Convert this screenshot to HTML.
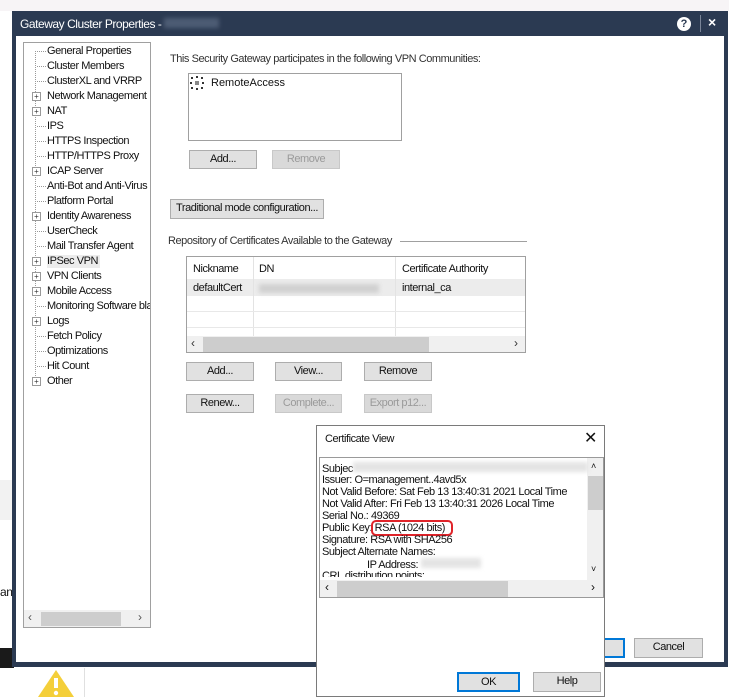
<!DOCTYPE html>
<html><head><meta charset="utf-8"><style>
*{margin:0;padding:0;box-sizing:border-box}
body{width:729px;height:697px;position:relative;overflow:hidden;background:#fff;font-family:"Liberation Sans",sans-serif;font-size:11px;color:#111;letter-spacing:-0.45px}
.a{position:absolute;white-space:nowrap}
.btn{position:absolute;background:#e1e1e1;border:1px solid #adadad;text-align:center;line-height:17px;font-size:11px;white-space:nowrap}
.dis{color:#9a9a9a;background:#d9d9d9;border-color:#c8c8c8}
.ti{position:absolute;left:47px;line-height:13px;white-space:nowrap}
.pl{position:absolute;left:32px;width:9px;height:9px;border:1px solid #999;font-size:8px;line-height:7px;text-align:center;color:#333;background:#fff;letter-spacing:0}
.dot{position:absolute;left:37px;width:9px;border-top:1px dotted #999}
.cl{position:absolute;left:322px;line-height:12px;font-size:11px;white-space:nowrap}
.blur{position:absolute;background:#e6e6e6;filter:blur(2px)}
</style></head><body>
<div class="a" style="left:0;top:0;width:729px;height:11px;background:#f7f4f6"></div>
<div class="a" style="left:0;top:480px;width:12px;height:40px;background:#f2f2f2"></div>
<div class="a" style="left:0;top:585px;font-size:12px">an</div>
<div class="a" style="left:0;top:648px;width:14px;height:20px;background:#1a1a1a"></div>
<svg class="a" style="left:36px;top:668px" width="40" height="29"><path d="M20 2 L38 29 L2 29 Z" fill="#f4cf3a"/><rect x="18" y="10" width="4" height="10" fill="#fff"/><circle cx="20" cy="25" r="2.2" fill="#fff"/></svg>
<div class="a" style="left:84px;top:668px;width:1px;height:29px;background:#e0e0e0"></div>
<div class="a" style="left:12px;top:11px;width:716px;height:656px;background:#2b3a52"></div>
<div class="a" style="left:16px;top:36px;width:708px;height:626px;background:#fff"></div>
<div class="a" style="left:20px;top:17px;color:#fff;font-size:12px">Gateway Cluster Properties - <span style="display:inline-block;width:55px;height:10px;background:#4d5c74;filter:blur(2px)"></span></div>
<div class="a" style="left:677px;top:17px;width:14px;height:14px;border-radius:50%;background:#fff;color:#2b3a52;font-weight:bold;font-size:11px;text-align:center;line-height:14px;letter-spacing:0">?</div>
<div class="a" style="left:700px;top:15px;width:1px;height:17px;background:#7a8598"></div>
<div class="a" style="left:708px;top:14px;color:#fff;font-size:14px;font-weight:bold">×</div>
<div class="a" style="left:23px;top:42px;width:128px;height:586px;overflow:hidden">
<div style="position:absolute;left:-23px;top:-41px;width:200px;height:700px">
<div class="a" style="left:35px;top:50px;height:331px;border-left:1px dotted #999"></div>
<div class="dot" style="top:50px"></div><div class="ti" style="top:44px">General Properties</div>
<div class="dot" style="top:65px"></div><div class="ti" style="top:59px">Cluster Members</div>
<div class="dot" style="top:80px"></div><div class="ti" style="top:74px">ClusterXL and VRRP</div>
<div class="pl" style="top:91px">+</div><div class="ti" style="top:89px">Network Management</div>
<div class="pl" style="top:106px">+</div><div class="ti" style="top:104px">NAT</div>
<div class="dot" style="top:125px"></div><div class="ti" style="top:119px">IPS</div>
<div class="dot" style="top:140px"></div><div class="ti" style="top:134px">HTTPS Inspection</div>
<div class="dot" style="top:155px"></div><div class="ti" style="top:149px">HTTP/HTTPS Proxy</div>
<div class="pl" style="top:166px">+</div><div class="ti" style="top:164px">ICAP Server</div>
<div class="dot" style="top:185px"></div><div class="ti" style="top:179px">Anti-Bot and Anti-Virus</div>
<div class="dot" style="top:200px"></div><div class="ti" style="top:194px">Platform Portal</div>
<div class="pl" style="top:211px">+</div><div class="ti" style="top:209px">Identity Awareness</div>
<div class="dot" style="top:230px"></div><div class="ti" style="top:224px">UserCheck</div>
<div class="dot" style="top:245px"></div><div class="ti" style="top:239px">Mail Transfer Agent</div>
<div class="pl" style="top:256px">+</div><div class="ti" style="top:254px;background:#ececec;padding-right:2px">IPSec VPN</div>
<div class="pl" style="top:271px">+</div><div class="ti" style="top:269px">VPN Clients</div>
<div class="pl" style="top:286px">+</div><div class="ti" style="top:284px">Mobile Access</div>
<div class="dot" style="top:305px"></div><div class="ti" style="top:299px">Monitoring Software blade</div>
<div class="pl" style="top:316px">+</div><div class="ti" style="top:314px">Logs</div>
<div class="dot" style="top:335px"></div><div class="ti" style="top:329px">Fetch Policy</div>
<div class="dot" style="top:350px"></div><div class="ti" style="top:344px">Optimizations</div>
<div class="dot" style="top:365px"></div><div class="ti" style="top:359px">Hit Count</div>
<div class="pl" style="top:376px">+</div><div class="ti" style="top:374px">Other</div>
</div>
<div class="a" style="left:1px;top:568px;width:126px;height:17px;background:#f0f0f0"></div>
<div class="a" style="left:18px;top:570px;width:80px;height:14px;background:#cdcdcd"></div>
<div class="a" style="left:5px;top:568px;font-size:12px;color:#555">‹</div>
<div class="a" style="left:115px;top:568px;font-size:12px;color:#555">›</div>
</div>
<div class="a" style="left:23px;top:42px;width:128px;height:586px;border:1px solid #a0a0a0"></div>
<div class="a" style="left:170px;top:53px;color:#333">This Security Gateway participates in the following VPN Communities:</div>
<div class="a" style="left:188px;top:73px;width:214px;height:68px;border:1px solid #a0a0a0"></div>
<svg class="a" style="left:190px;top:76px" width="14" height="14"><g fill="#333"><rect x="1" y="1" width="2" height="2"/><rect x="6" y="0" width="2" height="2"/><rect x="11" y="1" width="2" height="2"/><rect x="0" y="6" width="2" height="2"/><rect x="12" y="6" width="2" height="2"/><rect x="1" y="11" width="2" height="2"/><rect x="6" y="12" width="2" height="2"/><rect x="11" y="11" width="2" height="2"/><rect x="5" y="5" width="4" height="4" fill="#888"/></g></svg>
<div class="a" style="left:211px;top:77px;font-size:11px;letter-spacing:0">RemoteAccess</div>
<div class="btn" style="left:189px;top:150px;width:68px;height:19px">Add...</div>
<div class="btn dis" style="left:272px;top:150px;width:68px;height:19px">Remove</div>
<div class="btn" style="left:170px;top:199px;width:154px;height:20px">Traditional mode configuration...</div>
<div class="a" style="left:168px;top:235px;color:#333">Repository of Certificates Available to the Gateway</div>
<div class="a" style="left:400px;top:241px;width:127px;height:1px;background:#a0a0a0"></div>
<div class="a" style="left:186px;top:256px;width:340px;height:97px;border:1px solid #a0a0a0;overflow:hidden">
<div class="a" style="left:0;top:22px;width:340px;height:17px;background:#ececec"></div>
<div class="a" style="left:66px;top:0;width:1px;height:80px;background:#e3e3e3"></div>
<div class="a" style="left:208px;top:0;width:1px;height:80px;background:#e3e3e3"></div>
<div class="a" style="left:0;top:54px;width:340px;height:1px;background:#e8e8e8"></div>
<div class="a" style="left:0;top:70px;width:340px;height:1px;background:#e8e8e8"></div>
<div class="a" style="left:6px;top:6px">Nickname</div><div class="a" style="left:72px;top:6px">DN</div><div class="a" style="left:215px;top:6px">Certificate Authority</div>
<div class="a" style="left:6px;top:25px">defaultCert</div>
<div class="blur" style="left:72px;top:27px;width:120px;height:9px;background:#d0d0d0"></div>
<div class="a" style="left:215px;top:25px">internal_ca</div>
<div class="a" style="left:0;top:79px;width:340px;height:17px;background:#f0f0f0"></div>
<div class="a" style="left:16px;top:80px;width:226px;height:15px;background:#cdcdcd"></div>
<div class="a" style="left:4px;top:79px;font-size:12px;color:#333">‹</div>
<div class="a" style="left:327px;top:79px;font-size:12px;color:#333">›</div>
</div>
<div class="btn" style="left:186px;top:362px;width:68px;height:19px">Add...</div>
<div class="btn" style="left:275px;top:362px;width:67px;height:19px">View...</div>
<div class="btn" style="left:364px;top:362px;width:68px;height:19px">Remove</div>
<div class="btn" style="left:186px;top:394px;width:68px;height:19px">Renew...</div>
<div class="btn dis" style="left:275px;top:394px;width:67px;height:19px">Complete...</div>
<div class="btn dis" style="left:364px;top:394px;width:68px;height:19px">Export p12...</div>
<div class="btn" style="left:600px;top:638px;width:25px;height:20px;border:2px solid #0078d7"></div>
<div class="btn" style="left:634px;top:638px;width:69px;height:20px">Cancel</div>
<div class="a" style="left:316px;top:425px;width:289px;height:272px;background:#fff;border:1px solid #7a7a7a"></div>
<div class="a" style="left:325px;top:433px;font-size:11px">Certificate View</div>
<div class="a" style="left:584px;top:428px;font-size:16px;font-weight:300">✕</div>
<div class="a" style="left:319px;top:457px;width:285px;height:141px;border:1px solid #9a9a9a;overflow:hidden">
<div class="a" style="left:267px;top:0;width:17px;height:122px;background:#f0f0f0"></div>
<div class="a" style="left:268px;top:18px;width:15px;height:34px;background:#cdcdcd"></div>
<div class="a" style="left:271px;top:3px;font-size:9px">˄</div>
<div class="a" style="left:271px;top:106px;font-size:9px">˅</div>
<div class="a" style="left:0;top:122px;width:284px;height:18px;background:#f0f0f0"></div>
<div class="a" style="left:17px;top:123px;width:171px;height:16px;background:#cdcdcd"></div>
<div class="a" style="left:5px;top:122px;font-size:12px">‹</div>
<div class="a" style="left:271px;top:122px;font-size:12px">›</div>
</div>
<div class="cl" style="top:462px">Subjec<span style="display:inline-block;width:235px;height:10px;background:#e4e4e4;filter:blur(2px)"></span></div>
<div class="cl" style="top:474px">Issuer: O=management..4avd5x</div>
<div class="cl" style="top:486px">Not Valid Before: Sat Feb 13 13:40:31 2021 Local Time</div>
<div class="cl" style="top:498px">Not Valid After:  Fri Feb 13 13:40:31 2026 Local Time</div>
<div class="cl" style="top:510px">Serial No.:  49369</div>
<div class="cl" style="top:522px">Public Key: RSA (1024 bits)</div>
<div class="a" style="left:371px;top:520px;width:82px;height:16px;border:2px solid #e0242a;border-radius:5px"></div>
<div class="cl" style="top:534px">Signature: RSA with SHA256</div>
<div class="cl" style="top:546px">Subject Alternate Names:</div>
<div class="cl" style="top:558px;left:367px">IP Address: <span style="display:inline-block;width:60px;height:10px;background:#e4e4e4;filter:blur(2px)"></span></div>
<div class="cl" style="top:570px;height:7px;overflow:hidden">CRL distribution points:</div>
<div class="btn" style="left:457px;top:672px;width:63px;height:20px;border:2px solid #0078d7">OK</div>
<div class="btn" style="left:533px;top:672px;width:68px;height:20px">Help</div>
</body></html>
